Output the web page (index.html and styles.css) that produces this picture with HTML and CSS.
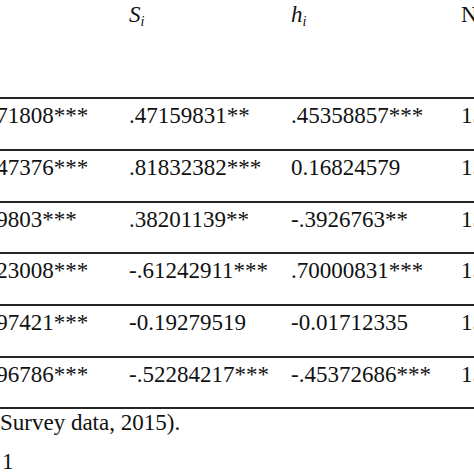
FILE: index.html
```html
<!DOCTYPE html>
<html>
<head>
<meta charset="utf-8">
<link rel="stylesheet" href="styles.css">
</head>
<body>
<div class="page">
  <div class="table">
    <div class="head">
      <div class="cell"></div>
      <div class="cell"><span class="var">S</span><sub class="idx">i</sub></div>
      <div class="cell"><span class="var">h</span><sub class="idx">i</sub></div>
      <div class="cell">N</div>
    </div>
    <div class="row">
      <div class="cell">.54371808***</div>
      <div class="cell">.47159831**</div>
      <div class="cell">.45358857***</div>
      <div class="cell">150</div>
    </div>
    <div class="row">
      <div class="cell">.62147376***</div>
      <div class="cell">.81832382***</div>
      <div class="cell">0.16824579</div>
      <div class="cell">150</div>
    </div>
    <div class="row">
      <div class="cell">.4129803***</div>
      <div class="cell">.38201139**</div>
      <div class="cell">-.3926763**</div>
      <div class="cell">150</div>
    </div>
    <div class="row">
      <div class="cell">.78523008***</div>
      <div class="cell">-.61242911***</div>
      <div class="cell">.70000831***</div>
      <div class="cell">150</div>
    </div>
    <div class="row">
      <div class="cell">.36197421***</div>
      <div class="cell">-0.19279519</div>
      <div class="cell">-0.01712335</div>
      <div class="cell">150</div>
    </div>
    <div class="row last">
      <div class="cell">.41296786***</div>
      <div class="cell">-.52284217***</div>
      <div class="cell">-.45372686***</div>
      <div class="cell">150</div>
    </div>
  </div>
  <p class="note">Survey data, 2015).</p>
  <p class="note second">1</p>
</div>
</body>
</html>
```
FILE: styles.css
```css
html, body {
  margin: 0;
  padding: 0;
  background: #ffffff;
}

body {
  width: 474px;
  height: 474px;
  overflow: hidden;
  font-family: "Liberation Serif", "Times New Roman", serif;
  font-size: 23px;
  color: #111111;
}

.page {
  width: 474px;
}

.table {
  margin-left: -44px;
  width: 524px;
}

.head,
.row {
  display: grid;
  grid-template-columns: 173px 162px 170px 19px;
  box-sizing: border-box;
}

.head {
  height: 97px;
  padding-top: 2px;
  line-height: 25px;
}

.row {
  height: 51.8px;
  border-top: 2px solid #252525;
  padding-top: 4px;
  line-height: 25px;
}

.row.last {
  height: 52.8px;
  border-bottom: 2px solid #252525;
}

.cell {
  white-space: nowrap;
}

.var {
  font-style: italic;
}

.idx {
  font-style: italic;
  font-size: 14px;
  vertical-align: -4px;
  line-height: 0;
}

.note {
  margin: 0;
  padding-top: 1px;
  line-height: 25px;
  white-space: nowrap;
}

.note.second {
  margin-top: 13px;
  padding-left: 2px;
}
```
